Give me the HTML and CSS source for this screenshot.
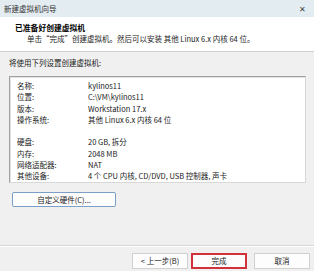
FILE: index.html
```html
<!DOCTYPE html>
<html>
<head>
<meta charset="utf-8">
<link rel="stylesheet" href="styles.css">
</head>
<body>
<div class="win">
  <div class="titlebar">
    <span class="ttl">新建虚拟机向导</span>
    <span class="close">✕</span>
  </div>
  <div class="header">
    <div class="h1">已准备好创建虚拟机</div>
    <div class="h2">单击“完成”创建虚拟机。然后可以安装 其他 Linux 6.x 内核 64 位。</div>
  </div>
  <div class="main">
    <div class="lead">将使用下列设置创建虚拟机:</div>
    <div class="box">
      <div class="row"><span class="k">名称:</span><span class="v">kylinos11</span></div>
      <div class="row"><span class="k">位置:</span><span class="v">C:\VM\kylinos11</span></div>
      <div class="row"><span class="k">版本:</span><span class="v">Workstation 17.x</span></div>
      <div class="row"><span class="k">操作系统:</span><span class="v">其他 Linux 6.x 内核 64 位</span></div>
      <div class="row gap"></div>
      <div class="row"><span class="k">硬盘:</span><span class="v">20 GB, 拆分</span></div>
      <div class="row"><span class="k">内存:</span><span class="v">2048 MB</span></div>
      <div class="row"><span class="k">网络适配器:</span><span class="v">NAT</span></div>
      <div class="row"><span class="k">其他设备:</span><span class="v">4 个 CPU 内核, CD/DVD, USB 控制器, 声卡</span></div>
    </div>
    <div class="custom">自定义硬件(C)...</div>
  </div>
  <div class="footer">
    <div class="btn">&lt; 上一步(B)</div>
    <div class="btn finish">完成</div>
    <div class="btn cancel">取消</div>
  </div>
</div>
</body>
</html>
```
FILE: styles.css
```css
* { box-sizing: border-box; }
html, body { margin: 0; padding: 0; }
body {
  width: 314px; height: 271px; overflow: hidden;
  font-family: "Noto Sans CJK SC", "Liberation Sans", sans-serif;
  font-size: 7.5px; color: #1a1a1a; background: #f0f0f0;
}
.win { display: flex; flex-direction: column; height: 271px; }
.titlebar {
  height: 17px; background: #e3ecf1; display: flex; align-items: center;
  justify-content: space-between; padding: 0 8px 0 4px; color: #333;
}
.close { font-size: 8px; color: #444; }
.header {
  height: 35px; background: #fff; border-bottom: 1px solid #d0d0d0;
  padding: 5px 0 0 15px; line-height: 11px;
}
.h1 { font-weight: bold; font-size: 7.8px; color: #000; }
.h2 { padding-left: 12px; }
.main {
  flex: 1; padding: 5px 8px 0 9px; display: flex; flex-direction: column;
  border-bottom: 1px solid #d6d6d6;
}
.lead { line-height: 12px; margin-bottom: 7px; }
.box {
  background: #fff; border: 1px solid #a0a0a0; border-right-color: #d8d8d8; border-bottom-color: #d8d8d8;
  box-shadow: inset 1px 1px 0 #e3e3e3;
  height: 107px; width: 297px; padding: 3px 0 0 7px;
}
.row { display: flex; height: 11.3px; line-height: 11.3px; }
.k { width: 71px; }
.custom {
  margin: 9px 0 0 3px; width: 104px; height: 15px; line-height: 13px;
  border: 1px solid #7aa0c8; border-radius: 2px; background: #fdfdfd; text-align: center;
}
.footer {
  height: 25px; display: flex; justify-content: flex-end; align-items: flex-start;
  padding: 6px 4px 0 0; gap: 3px; border-top: 1px solid #fff;
}
.btn {
  width: 56px; height: 16px; line-height: 14px; text-align: center;
  border: 1px solid #d0d0d0; background: #fdfdfd;
}
.finish { border: 2px solid #d0323c; line-height: 12px; }
.cancel { margin-left: 4px; }
```
